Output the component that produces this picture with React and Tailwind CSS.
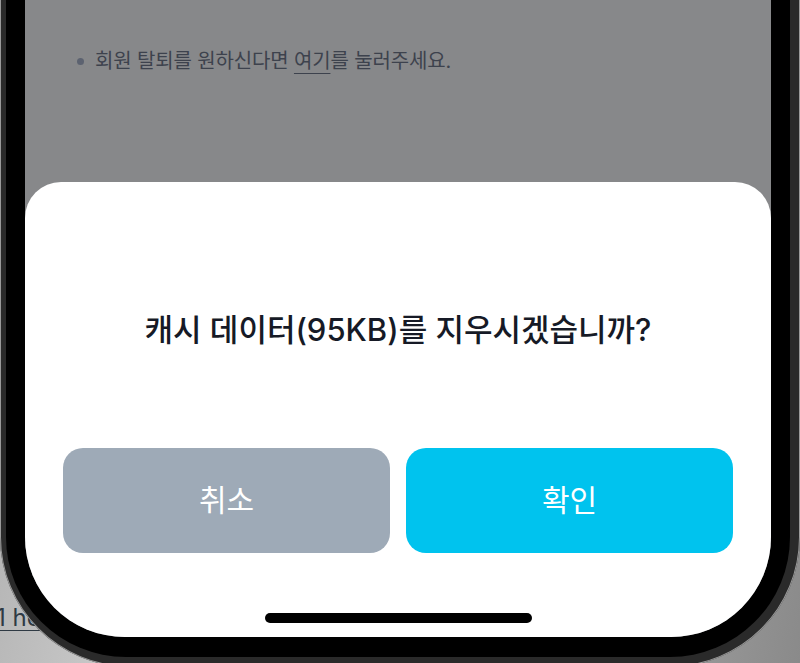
import React from "react";

const KR = { fontFamily: "Inter, 'Noto Sans CJK KR', sans-serif" };

function NoticeItem({ children }) {
  return (
    <li className="flex items-center gap-[11px] text-[20px] leading-[28px] text-[#3d424d]">
      <span className="w-[7px] h-[7px] rounded-full bg-[#5c6270]" />
      <span className="tracking-[-0.15px]">{children}</span>
    </li>
  );
}

function SheetButton({ label, tone }) {
  return (
    <button
      className={
        "flex-1 h-[105px] rounded-[20px] text-white text-[30px] font-normal " +
        (tone === "primary" ? "bg-[#00c3ee]" : "bg-[#9eaab7]")
      }
    >
      {label}
    </button>
  );
}

export default function App() {
  return (
    <div
      className="relative w-[800px] h-[663px] overflow-hidden bg-[linear-gradient(100deg,#a9a9a9_0%,#d6d6d6_35%,#8a8a8a_100%)]"
      style={KR}
    >
      {/* page behind the device */}
      <span className="absolute left-[-4px] top-[600px] text-[24px] text-[#2f3a44] underline decoration-1 underline-offset-4">
        1 hour
      </span>

      {/* device frame */}
      <div className="absolute left-0 right-0 top-[-100px] bottom-[-4px] rounded-b-[130px] bg-[#2a2a2a] pl-[6px] pr-[10px] pb-[10px] shadow-[inset_0_0_0_1px_#9a9a9a]">
        <div className="h-full rounded-b-[120px] bg-black px-[19px] pb-[20px]">
          <div className="h-full rounded-b-[100px] overflow-hidden bg-[#87888a] flex flex-col">
            {/* dimmed page */}
            <div className="h-[282px] pt-[147px] pl-[52px]">
              <ul>
                <NoticeItem>
                  회원 탈퇴를 원하신다면{" "}
                  <span className="underline underline-offset-[5px] decoration-1">여기</span>를 눌러주세요.
                </NoticeItem>
              </ul>
            </div>

            {/* bottom sheet */}
            <div className="flex-1 bg-white rounded-t-[36px] flex flex-col items-center px-[38px]">
              <h2 className="pt-[128px] text-[31px] leading-[40px] font-medium text-[#161a26]">
                캐시 데이터(95KB)를 지우시겠습니까?
              </h2>
              <div className="mt-[98px] w-full flex gap-[16px]">
                <SheetButton label="취소" />
                <SheetButton label="확인" tone="primary" />
              </div>
              <div className="mt-[60px] w-[267px] h-[10px] rounded-full bg-black" />
            </div>
          </div>
        </div>
      </div>
    </div>
  );
}
